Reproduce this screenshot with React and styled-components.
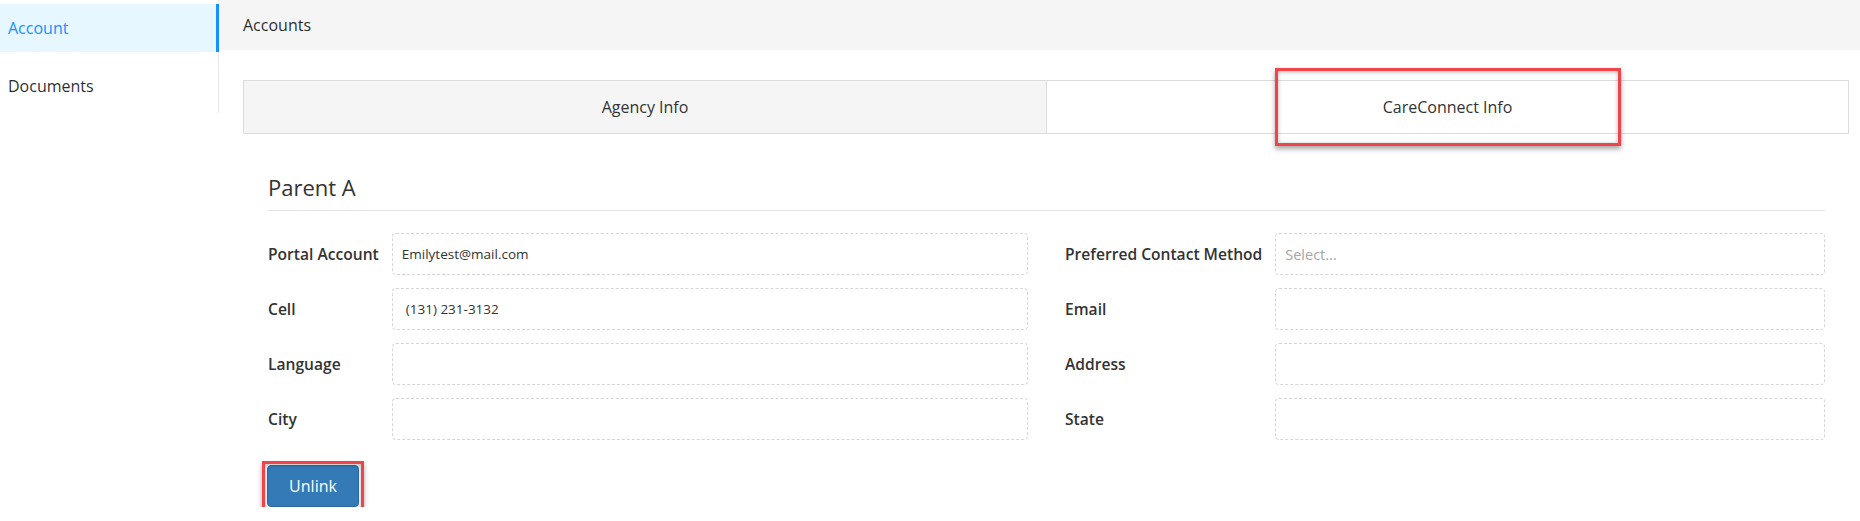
import React from "react";
import styled, { createGlobalStyle, css } from "styled-components";

const GlobalStyle = createGlobalStyle`
  html, body { margin: 0; padding: 0; background: #fff; }
  body {
    font-family: "Open Sans", "Noto Sans", "Liberation Sans", sans-serif;
    color: #333;
    -webkit-font-smoothing: antialiased;
  }
  * { box-sizing: border-box; }
`;

const Page = styled.div`
  display: flex;
  align-items: flex-start;
  width: 100%;
`;

const Sidebar = styled.nav`
  flex: none;
  width: 219px;
  padding: 4px 0 3px;
  border-right: 1px solid #e8e8e8;
  display: flex;
  flex-direction: column;
  gap: 10px;
`;

const MenuItem = styled.div`
  position: relative;
  height: 48px;
  line-height: 48px;
  padding-left: 8px;
  font-size: 16px;
  color: rgba(0, 0, 0, 0.85);
  cursor: pointer;
  ${(p) =>
    p.$active &&
    css`
      background: #e6f7ff;
      color: #1890ff;
      &::after {
        content: "";
        position: absolute;
        top: 0;
        bottom: 0;
        right: -1px;
        width: 3px;
        background: #1890ff;
      }
    `}
`;

const Main = styled.main`
  flex: 1;
  min-width: 0;
`;

const Header = styled.header`
  height: 50px;
  background: #f5f5f5;
  display: flex;
  align-items: center;
  padding-left: 24px;
  font-size: 16px;
  color: rgba(0, 0, 0, 0.85);
`;

const Content = styled.div`
  padding: 30px 11px 0 24px;
`;

const Tabs = styled.div`
  display: grid;
  grid-template-columns: 1fr 1fr;
  border: 1px solid #dcdcdc;
  height: 54px;
`;

const Tab = styled.div`
  position: relative;
  display: flex;
  align-items: center;
  justify-content: center;
  font-size: 16px;
  color: #333;
  background: ${(p) => (p.$active ? "#fff" : "#f5f5f5")};
  & + & {
    border-left: 1px solid #dcdcdc;
  }
`;

const Highlight = styled.span`
  position: absolute;
  border: 3px solid #f0434a;
  box-shadow: 0 3px 5px rgba(0, 0, 0, 0.35), inset 0 1px 4px rgba(0, 0, 0, 0.3);
  pointer-events: none;
`;

const TabHighlight = styled(Highlight)`
  top: -13px;
  bottom: -13px;
  left: 50%;
  width: 346px;
  transform: translateX(-50%);
`;

const Section = styled.section`
  padding: 0 24px 0 25px;
`;

const Title = styled.h2`
  margin: 38px 0 0;
  font-size: 22px;
  line-height: 30px;
  font-weight: 400;
  color: #333;
  padding-bottom: 8px;
  border-bottom: 1px solid #e3e3e3;
`;

const Columns = styled.div`
  display: grid;
  grid-template-columns: 1fr 1fr;
  column-gap: 37px;
  margin-top: 22px;
`;

const FieldGrid = styled.div`
  display: grid;
  grid-template-columns: max-content 1fr;
  grid-auto-rows: 42px;
  column-gap: 13px;
  row-gap: 13px;
  align-items: center;
`;

const Label = styled.label`
  font-size: 15.6px;
  font-weight: 600;
  color: #333;
`;

const Field = styled.div`
  height: 42px;
  border: 1px dashed #d6d6d6;
  border-radius: 4px;
  display: flex;
  align-items: center;
  padding-left: ${(p) => (p.$indent ? "13px" : "9px")};
  font-size: ${(p) => (p.$placeholder ? "14.5px" : "13.5px")};
  color: ${(p) => (p.$placeholder ? "#a6a6a6" : "#333")};
`;

const ButtonWrap = styled.div`
  position: relative;
  display: inline-block;
  margin: 25px 0 0 -1px;
`;

const ButtonHighlight = styled(Highlight)`
  top: -4px;
  bottom: -4px;
  left: -5px;
  right: -5px;
`;

const Button = styled.button`
  width: 92px;
  height: 42px;
  border: 1px solid #2e6da4;
  border-radius: 4px;
  background: #337ab7;
  color: #fff;
  font-family: inherit;
  font-size: 16px;
  cursor: pointer;
`;

const leftFields = [
  { label: "Portal Account", value: "Emilytest@mail.com" },
  { label: "Cell", value: "(131) 231-3132", indent: true },
  { label: "Language", value: "" },
  { label: "City", value: "" },
];

const rightFields = [
  { label: "Preferred Contact Method", value: "Select...", placeholder: true },
  { label: "Email", value: "" },
  { label: "Address", value: "" },
  { label: "State", value: "" },
];

function Fields({ items }) {
  return (
    <FieldGrid>
      {items.map((f) => (
        <React.Fragment key={f.label}>
          <Label>{f.label}</Label>
          <Field $indent={f.indent} $placeholder={f.placeholder}>
            {f.value}
          </Field>
        </React.Fragment>
      ))}
    </FieldGrid>
  );
}

export default function App() {
  return (
    <>
      <GlobalStyle />
      <Page>
        <Sidebar>
          <MenuItem $active>Account</MenuItem>
          <MenuItem>Documents</MenuItem>
        </Sidebar>
        <Main>
          <Header>Accounts</Header>
          <Content>
            <Tabs>
              <Tab>Agency Info</Tab>
              <Tab $active>
                CareConnect Info
                <TabHighlight />
              </Tab>
            </Tabs>
            <Section>
              <Title>Parent A</Title>
              <Columns>
                <Fields items={leftFields} />
                <Fields items={rightFields} />
              </Columns>
              <ButtonWrap>
                <Button>Unlink</Button>
                <ButtonHighlight />
              </ButtonWrap>
            </Section>
          </Content>
        </Main>
      </Page>
    </>
  );
}
